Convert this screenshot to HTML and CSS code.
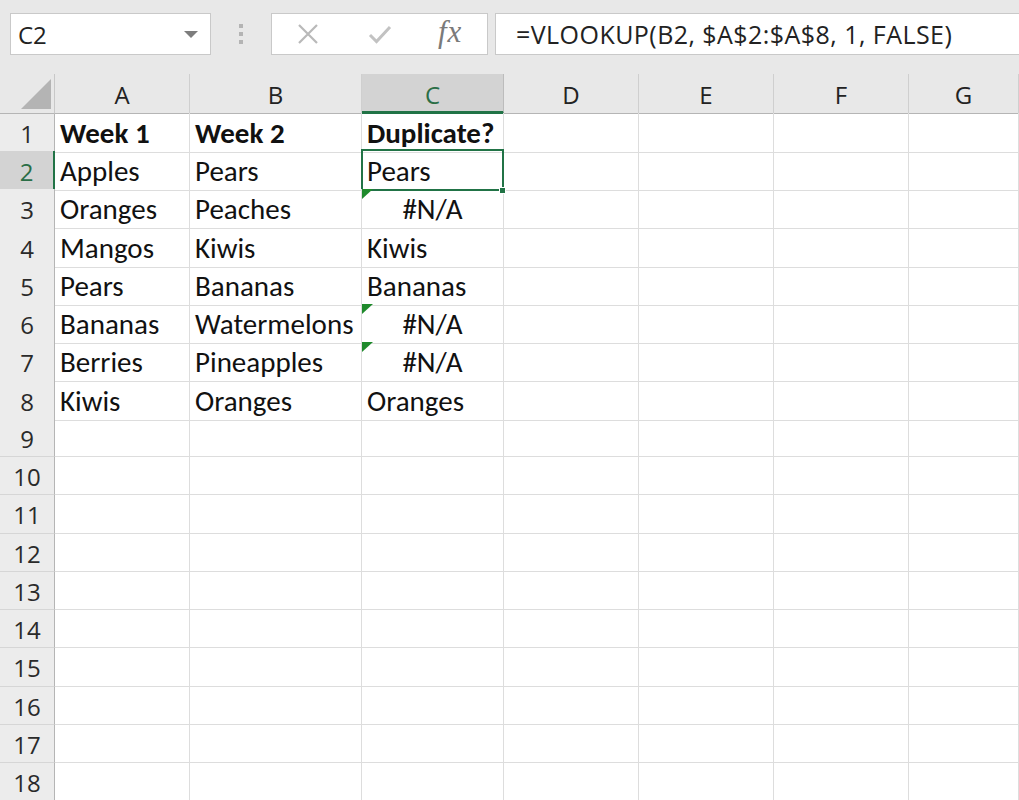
FILE: index.html
```html
<!DOCTYPE html>
<html lang="en">
<head>
<meta charset="utf-8">
<title>Book1 - Excel</title>
<link rel="stylesheet" href="styles.css">
</head>
<body>
<div class="app">
  <div class="toolbar">
    <div class="namebox">
      <span class="namebox-text">C2</span>
      <svg class="caret" width="14" height="8" viewBox="0 0 14 8"><path d="M0 0 L14 0 L7 7 Z" fill="#7d7d7d"/></svg>
    </div>
    <div class="grip"><i></i><i></i><i></i></div>
    <div class="fxbox">
      <svg class="btn-cancel" width="22" height="22" viewBox="0 0 22 22"><path d="M2 2 L20 20 M20 2 L2 20" stroke="#b9b9b9" stroke-width="2.2" fill="none"/></svg>
      <svg class="btn-enter" width="24" height="20" viewBox="0 0 24 20"><path d="M2 11 L8.5 17.5 L22 3" stroke="#c2c2c2" stroke-width="3" fill="none"/></svg>
      <span class="btn-fx">fx</span>
    </div>
    <div class="formula">=VLOOKUP(B2, $A$2:$A$8, 1, FALSE)</div>
  </div>

  <div class="sheet">
    <div class="row head">
      <div class="corner"><span class="corner-tri"></span></div>
      <div class="colh">A</div>
      <div class="colh">B</div>
      <div class="colh active">C</div>
      <div class="colh">D</div>
      <div class="colh">E</div>
      <div class="colh">F</div>
      <div class="colh">G</div>
    </div>

    <div class="row">
      <div class="rowh">1</div>
      <div class="cell b">Week 1</div>
      <div class="cell b">Week 2</div>
      <div class="cell b">Duplicate?</div>
      <div class="cell"></div><div class="cell"></div><div class="cell"></div><div class="cell"></div>
    </div>
    <div class="row">
      <div class="rowh active">2</div>
      <div class="cell">Apples</div>
      <div class="cell">Pears</div>
      <div class="cell selected">Pears<span class="fill-handle"></span></div>
      <div class="cell"></div><div class="cell"></div><div class="cell"></div><div class="cell"></div>
    </div>
    <div class="row">
      <div class="rowh">3</div>
      <div class="cell">Oranges</div>
      <div class="cell">Peaches</div>
      <div class="cell err">#N/A</div>
      <div class="cell"></div><div class="cell"></div><div class="cell"></div><div class="cell"></div>
    </div>
    <div class="row">
      <div class="rowh">4</div>
      <div class="cell">Mangos</div>
      <div class="cell">Kiwis</div>
      <div class="cell">Kiwis</div>
      <div class="cell"></div><div class="cell"></div><div class="cell"></div><div class="cell"></div>
    </div>
    <div class="row">
      <div class="rowh">5</div>
      <div class="cell">Pears</div>
      <div class="cell">Bananas</div>
      <div class="cell">Bananas</div>
      <div class="cell"></div><div class="cell"></div><div class="cell"></div><div class="cell"></div>
    </div>
    <div class="row">
      <div class="rowh">6</div>
      <div class="cell">Bananas</div>
      <div class="cell">Watermelons</div>
      <div class="cell err">#N/A</div>
      <div class="cell"></div><div class="cell"></div><div class="cell"></div><div class="cell"></div>
    </div>
    <div class="row">
      <div class="rowh">7</div>
      <div class="cell">Berries</div>
      <div class="cell">Pineapples</div>
      <div class="cell err">#N/A</div>
      <div class="cell"></div><div class="cell"></div><div class="cell"></div><div class="cell"></div>
    </div>
    <div class="row">
      <div class="rowh">8</div>
      <div class="cell">Kiwis</div>
      <div class="cell">Oranges</div>
      <div class="cell">Oranges</div>
      <div class="cell"></div><div class="cell"></div><div class="cell"></div><div class="cell"></div>
    </div>
    <div class="row"><div class="rowh">9</div><div class="cell"></div><div class="cell"></div><div class="cell"></div><div class="cell"></div><div class="cell"></div><div class="cell"></div><div class="cell"></div></div>
    <div class="row"><div class="rowh">10</div><div class="cell"></div><div class="cell"></div><div class="cell"></div><div class="cell"></div><div class="cell"></div><div class="cell"></div><div class="cell"></div></div>
    <div class="row"><div class="rowh">11</div><div class="cell"></div><div class="cell"></div><div class="cell"></div><div class="cell"></div><div class="cell"></div><div class="cell"></div><div class="cell"></div></div>
    <div class="row"><div class="rowh">12</div><div class="cell"></div><div class="cell"></div><div class="cell"></div><div class="cell"></div><div class="cell"></div><div class="cell"></div><div class="cell"></div></div>
    <div class="row"><div class="rowh">13</div><div class="cell"></div><div class="cell"></div><div class="cell"></div><div class="cell"></div><div class="cell"></div><div class="cell"></div><div class="cell"></div></div>
    <div class="row"><div class="rowh">14</div><div class="cell"></div><div class="cell"></div><div class="cell"></div><div class="cell"></div><div class="cell"></div><div class="cell"></div><div class="cell"></div></div>
    <div class="row"><div class="rowh">15</div><div class="cell"></div><div class="cell"></div><div class="cell"></div><div class="cell"></div><div class="cell"></div><div class="cell"></div><div class="cell"></div></div>
    <div class="row"><div class="rowh">16</div><div class="cell"></div><div class="cell"></div><div class="cell"></div><div class="cell"></div><div class="cell"></div><div class="cell"></div><div class="cell"></div></div>
    <div class="row"><div class="rowh">17</div><div class="cell"></div><div class="cell"></div><div class="cell"></div><div class="cell"></div><div class="cell"></div><div class="cell"></div><div class="cell"></div></div>
    <div class="row"><div class="rowh">18</div><div class="cell"></div><div class="cell"></div><div class="cell"></div><div class="cell"></div><div class="cell"></div><div class="cell"></div><div class="cell"></div></div>
  </div>
</div>
</body>
</html>
```

FILE: styles.css
```css
* { box-sizing: border-box; }

html, body {
  margin: 0;
  padding: 0;
  background: #ffffff;
  overflow: hidden;
}

.app {
  width: 1019px;
  height: 800px;
  font-family: "Carlito", "Lato", "Noto Sans", sans-serif;
  color: #111;
  background: #e8e8e8;
}

/* ---------- formula bar ---------- */
.toolbar {
  height: 74px;
  display: flex;
  align-items: flex-start;
  padding: 13px 0 0 10px;
  background: #e8e8e8;
  font-family: "Open Sans", "Noto Sans", sans-serif;
}

.namebox {
  width: 201px;
  height: 42px;
  background: #fff;
  border: 1px solid #c9c9c9;
  display: flex;
  align-items: center;
  justify-content: space-between;
  padding: 0 12px 0 7px;
}

.namebox-text {
  font-size: 24px;
  color: #222;
}

.caret { margin-top: 2px; }

.grip {
  width: 60px;
  height: 42px;
  display: flex;
  flex-direction: column;
  align-items: center;
  justify-content: center;
  gap: 4px;
}

.grip i {
  display: block;
  width: 4px;
  height: 4px;
  background: #b4b4b4;
}

.fxbox {
  width: 217px;
  height: 42px;
  background: #fff;
  border: 1px solid #c9c9c9;
  display: flex;
  align-items: center;
  padding-left: 25px;
}

.btn-cancel { margin-right: 49px; }
.btn-enter { margin-right: 46px; }

.btn-fx {
  font-family: "Liberation Serif", "DejaVu Serif", serif;
  font-style: italic;
  font-size: 31px;
  color: #7a7a7a;
  letter-spacing: 1px;
  margin-top: -4px;
}

.formula {
  flex: 1;
  height: 42px;
  margin-left: 7px;
  background: #fff;
  border: 1px solid #c9c9c9;
  border-right: none;
  display: flex;
  align-items: center;
  padding-left: 20px;
  font-size: 25px;
  letter-spacing: 0.45px;
  color: #222;
  white-space: nowrap;
}

/* ---------- grid ---------- */
.sheet {
  background: #fff;
}

.row {
  display: grid;
  grid-template-columns: 55px 135px 172px 142px 135px 135px 135px 1fr;
  height: 38.24px;
}

.row.head {
  height: 39px;
  background: #e8e8e8;
}

.corner {
  border-right: 1px solid #c8c8c8;
  border-bottom: 1px solid #b5b5b5;
  position: relative;
}

.corner-tri {
  position: absolute;
  right: 3px;
  bottom: 4px;
  width: 0;
  height: 0;
  border-left: 30px solid transparent;
  border-bottom: 30px solid #b4b4b4;
}

.colh, .rowh {
  font-family: "Open Sans", "Noto Sans", sans-serif;
}

.colh {
  border-right: 1px solid #cfcfcf;
  border-bottom: 1px solid #b5b5b5;
  display: flex;
  align-items: center;
  justify-content: center;
  font-size: 24px;
  color: #222;
  padding-top: 2px;
}

.colh.active {
  background: #d3d3d3;
  color: #2a6e46;
  border-bottom: 3px solid #217346;
  border-right-color: #bcbcbc;
  padding-top: 4px;
}

.rowh {
  background: #ececec;
  border-right: 1px solid #b5b5b5;
  border-bottom: 1px solid #d6d6d6;
  display: flex;
  align-items: center;
  justify-content: center;
  font-size: 24px;
  color: #2a2a2a;
  padding-top: 2px;
}

.rowh.active {
  background: #d3d3d3;
  color: #2a6e46;
  border-right: 2px solid #217346;
}

.cell {
  border-right: 1px solid #dddddd;
  border-bottom: 1px solid #dddddd;
  font-size: 29px;
  line-height: 38px;
  padding-left: 5px;
  padding-top: 1px;
  white-space: nowrap;
  overflow: visible;
  position: relative;
  color: #111;
}

.cell.b { font-weight: 700; }

/* error values are centred and flagged with a green corner marker */
.cell.err {
  text-align: center;
  padding-left: 0;
}

.cell.err::before {
  content: "";
  position: absolute;
  left: 0;
  top: 0;
  width: 0;
  height: 0;
  border-top: 10px solid #1f8a2c;
  border-right: 11px solid transparent;
}

/* active cell outline */
.cell.selected::after {
  content: "";
  position: absolute;
  left: -1px;
  top: -2px;
  right: -1px;
  bottom: -1px;
  border: 2px solid #217346;
  pointer-events: none;
}

.fill-handle {
  position: absolute;
  right: -3px;
  bottom: -4px;
  width: 7px;
  height: 7px;
  background: #217346;
  border: 1px solid #fff;
  z-index: 2;
}
```
